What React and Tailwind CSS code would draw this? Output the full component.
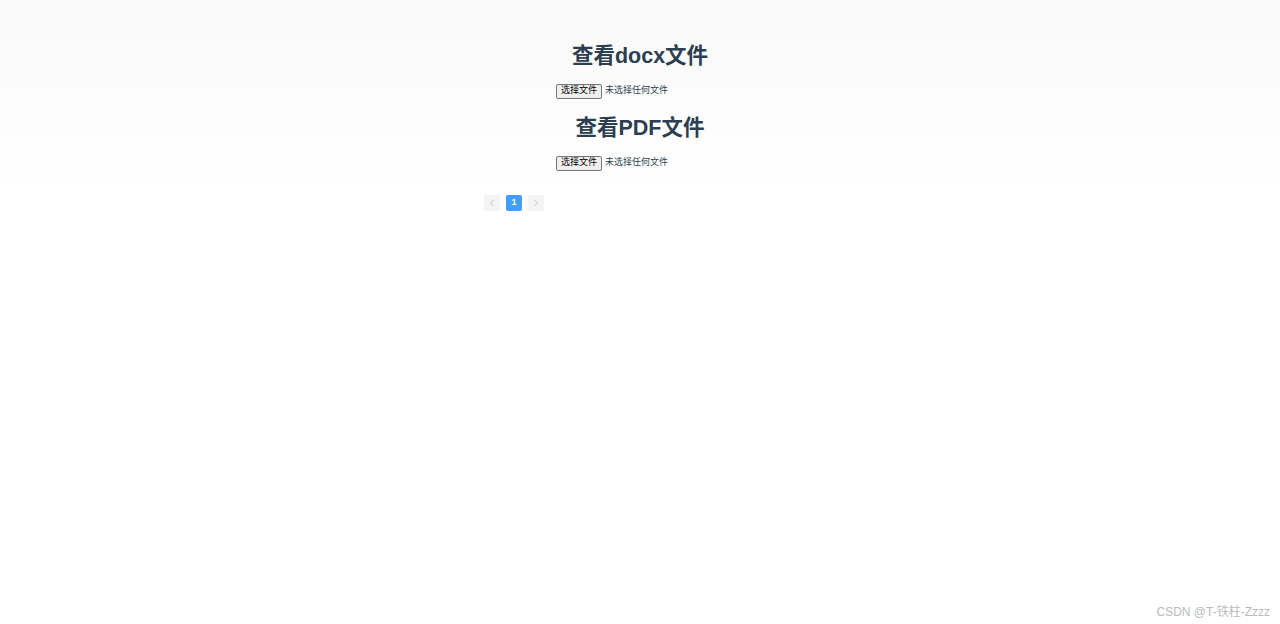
export default function App() {
  const font = { fontFamily: '"Liberation Sans", Arial, "Noto Sans CJK SC", sans-serif' };

  const FileRow = ({ className }) => (
    <div className={`mx-auto flex h-[16px] w-[168px] items-center ${className}`}>
      <span className="flex h-[15px] items-center rounded-[2px] border border-[#767676] bg-[#efefef] px-[4px] text-[9px] text-black">选择文件</span>
      <span className="ml-[3px] text-[9px] text-[#2c3e50]">未选择任何文件</span>
    </div>
  );

  return (
    <div className="relative h-[624px] w-[1280px] overflow-hidden bg-white" style={font}>
      <div className="bg-gradient-to-b from-[#f9f9f9] to-white pt-[41px] pb-[20px]">
        <h1 className="text-center text-[21.5px] font-bold leading-[30px] text-[#2c3e50]">查看docx文件</h1>
        <FileRow className="mt-[12px]" />
        <h2 className="mt-[14px] text-center text-[21.5px] font-bold leading-[30px] text-[#2c3e50]">查看PDF文件</h2>
        <FileRow className="mt-[12px]" />
      </div>
      <div className="mt-[4px] flex gap-[6px] pl-[484px]">
        <button className="flex h-[16px] w-[16px] items-center justify-center rounded-[2px] bg-[#f4f4f5] text-[#c0c4cc]">
          <svg width="6" height="8" viewBox="0 0 6 8" fill="none" stroke="currentColor" strokeWidth="1"><path d="M4.5 1 L1.5 4 L4.5 7" /></svg>
        </button>
        <button className="flex h-[16px] w-[16px] items-center justify-center rounded-[2px] bg-[#409eff] text-[9px] font-bold text-white">1</button>
        <button className="flex h-[16px] w-[16px] items-center justify-center rounded-[2px] bg-[#f4f4f5] text-[#c0c4cc]">
          <svg width="6" height="8" viewBox="0 0 6 8" fill="none" stroke="currentColor" strokeWidth="1"><path d="M1.5 1 L4.5 4 L1.5 7" /></svg>
        </button>
      </div>
      <div className="absolute bottom-[3px] right-[10px] text-[12px] text-[#bababa]">CSDN @T-铁柱-Zzzz</div>
    </div>
  );
}
